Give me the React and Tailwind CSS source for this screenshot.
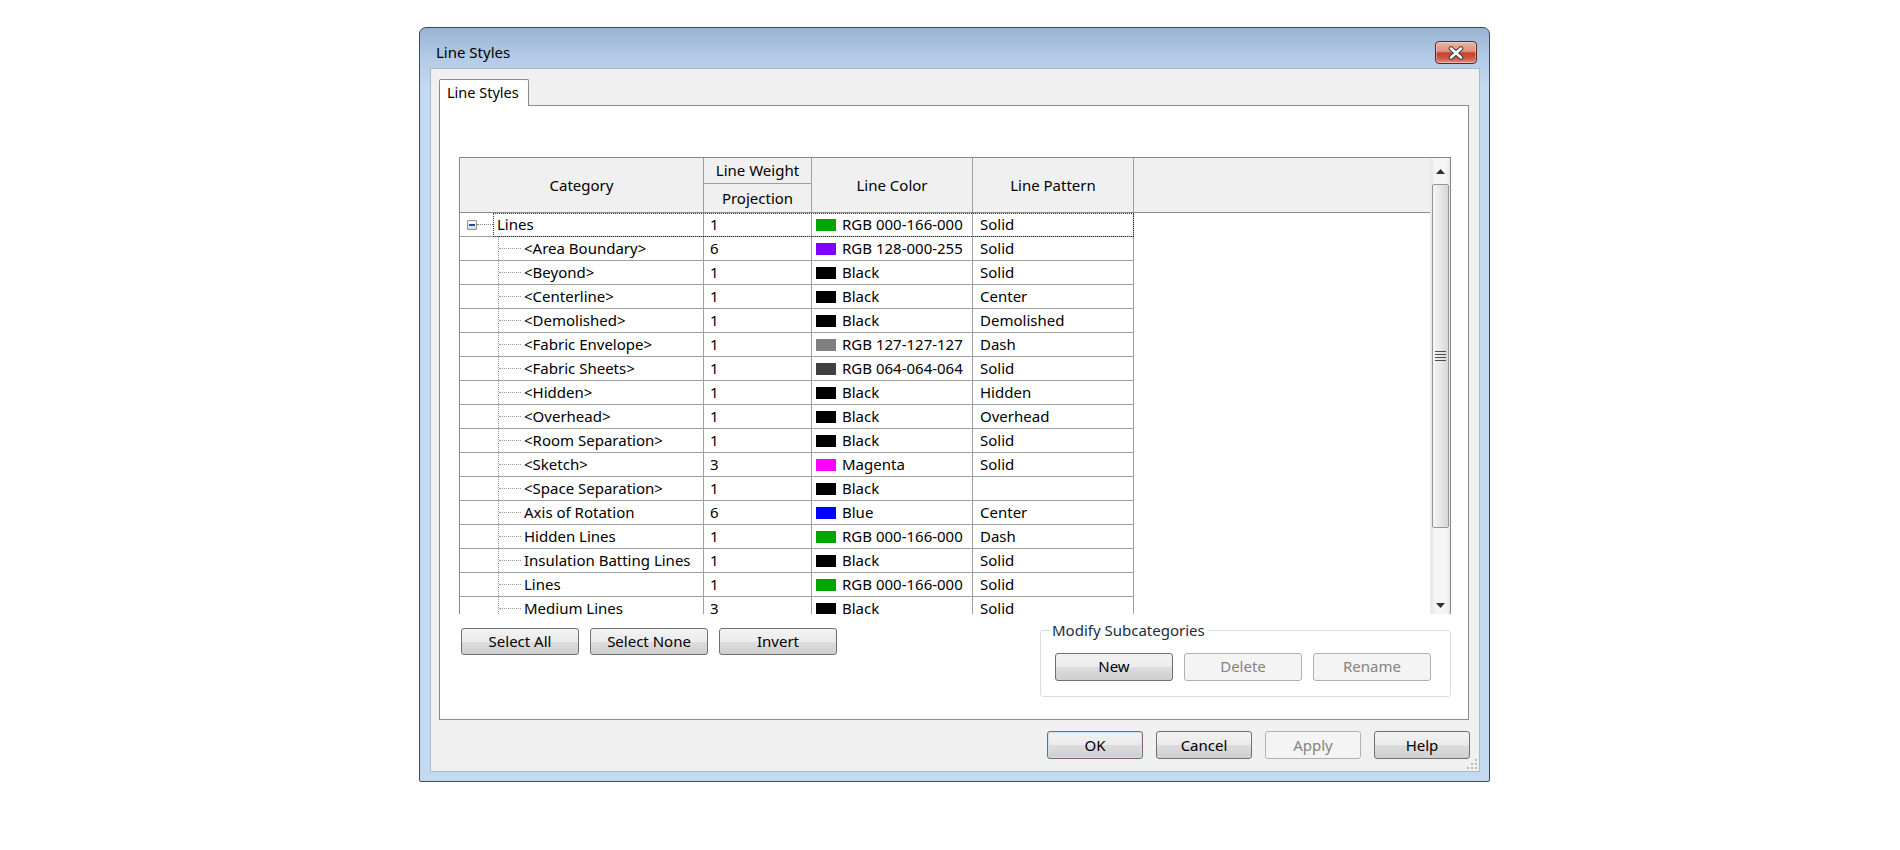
import React from "react";

const ROWS = [
  { name: "Lines", weight: "1", color: "#00a600", label: "RGB 000-166-000", pattern: "Solid", root: true },
  { name: "<Area Boundary>", weight: "6", color: "#8000ff", label: "RGB 128-000-255", pattern: "Solid" },
  { name: "<Beyond>", weight: "1", color: "#000000", label: "Black", pattern: "Solid" },
  { name: "<Centerline>", weight: "1", color: "#000000", label: "Black", pattern: "Center" },
  { name: "<Demolished>", weight: "1", color: "#000000", label: "Black", pattern: "Demolished" },
  { name: "<Fabric Envelope>", weight: "1", color: "#7f7f7f", label: "RGB 127-127-127", pattern: "Dash" },
  { name: "<Fabric Sheets>", weight: "1", color: "#404040", label: "RGB 064-064-064", pattern: "Solid" },
  { name: "<Hidden>", weight: "1", color: "#000000", label: "Black", pattern: "Hidden" },
  { name: "<Overhead>", weight: "1", color: "#000000", label: "Black", pattern: "Overhead" },
  { name: "<Room Separation>", weight: "1", color: "#000000", label: "Black", pattern: "Solid" },
  { name: "<Sketch>", weight: "3", color: "#ff00ff", label: "Magenta", pattern: "Solid" },
  { name: "<Space Separation>", weight: "1", color: "#000000", label: "Black", pattern: "" },
  { name: "Axis of Rotation", weight: "6", color: "#0000ff", label: "Blue", pattern: "Center" },
  { name: "Hidden Lines", weight: "1", color: "#00a600", label: "RGB 000-166-000", pattern: "Dash" },
  { name: "Insulation Batting Lines", weight: "1", color: "#000000", label: "Black", pattern: "Solid" },
  { name: "Lines", weight: "1", color: "#00a600", label: "RGB 000-166-000", pattern: "Solid" },
  { name: "Medium Lines", weight: "3", color: "#000000", label: "Black", pattern: "Solid" },
];

const BTN =
  "flex items-center justify-center rounded-[3px] border border-[#707070] bg-[linear-gradient(180deg,#f2f2f2_0%,#ebebeb_50%,#dddddd_51%,#cfcfcf_100%)] text-black";
const BTN_OFF =
  "flex items-center justify-center rounded-[3px] border border-[#adb2b5] bg-[#f4f4f4] text-[#838383]";

function CloseButton() {
  return (
    <div className="w-[42px] h-[23px] rounded-[4px] border border-[#5c2a24] bg-[linear-gradient(180deg,#ecb5a6_0%,#de8e7b_45%,#c3402e_52%,#cf5c47_80%,#e39684_100%)] flex items-center justify-center shadow-[inset_0_0_0_1px_rgba(255,255,255,0.35)]">
      <svg width="18" height="14" viewBox="0 0 18 14">
        <path d="M4 2.5 L14 11.5 M14 2.5 L4 11.5" stroke="#3d3d3d" strokeWidth="4.6" strokeLinecap="round" />
        <path d="M4 2.5 L14 11.5 M14 2.5 L4 11.5" stroke="#ffffff" strokeWidth="2.6" strokeLinecap="round" />
      </svg>
    </div>
  );
}

function TreeCell({ row }) {
  if (row.root) {
    return (
      <div className="flex items-center h-full">
        <div className="w-[7px]" />
        <div className="w-[10px] h-[10px] border border-[#8f8f8f] rounded-[1px] bg-[linear-gradient(180deg,#ffffff,#dcdcdc)] flex items-center justify-center">
          <div className="w-[6px] h-[2px] bg-[#2a4f9a]" />
        </div>
        <div className="w-[16px] border-t border-dotted border-[#8a8a8a]" />
        <span className="ml-[4px]">{row.name}</span>
      </div>
    );
  }
  return (
    <div className="flex items-center h-full">
      <div className="w-[38px] shrink-0" />
      <div className="h-full border-l border-dotted border-[#9a9a9a]" />
      <div className="w-[22px] border-t border-dotted border-[#9a9a9a]" />
      <span className="ml-[3px] whitespace-nowrap">{row.name}</span>
    </div>
  );
}

function Scrollbar() {
  return (
    <div className="w-[20px] shrink-0 flex flex-col bg-[linear-gradient(90deg,#e6e6e6,#f5f5f5_20%,#f5f5f5_80%,#e6e6e6)] border-l border-[#ececec]">
      <div className="h-[26px] flex items-center justify-center">
        <svg width="9" height="5" viewBox="0 0 9 5">
          <path d="M0 5 L4.5 0 L9 5 Z" fill="#2f2f2f" />
        </svg>
      </div>
      <div className="mx-[1px] h-[344px] rounded-[2px] border border-[#979797] bg-[linear-gradient(90deg,#f5f5f5,#e8e8e8_50%,#d6d6d6)] flex flex-col items-center justify-center gap-[2px]">
        <div className="w-[11px] h-[1px] bg-[#4d4d4d]" />
        <div className="w-[11px] h-[1px] bg-[#4d4d4d]" />
        <div className="w-[11px] h-[1px] bg-[#4d4d4d]" />
        <div className="w-[11px] h-[1px] bg-[#4d4d4d]" />
      </div>
      <div className="flex-1" />
      <div className="h-[18px] flex items-center justify-center">
        <svg width="9" height="5" viewBox="0 0 9 5">
          <path d="M0 0 L4.5 5 L9 0 Z" fill="#2f2f2f" />
        </svg>
      </div>
    </div>
  );
}

function Grid() {
  return (
    <div className="flex w-[992px] h-[457px] border-t border-x border-[#828790] overflow-hidden">
      <div className="w-[970px] flex flex-col">
        {/* header */}
        <div className="flex h-[55px] shrink-0 bg-[#f0f0f0] border-b border-[#8c8c8c]">
          <div className="w-[244px] border-r border-[#a0a0a0] flex items-center justify-center">Category</div>
          <div className="w-[108px] border-r border-[#a0a0a0] flex flex-col">
            <div className="h-[26px] border-b border-[#a0a0a0] flex items-center justify-center">Line Weight</div>
            <div className="flex-1 flex items-center justify-center">Projection</div>
          </div>
          <div className="w-[161px] border-r border-[#a0a0a0] flex items-center justify-center">Line Color</div>
          <div className="w-[161px] border-r border-[#a0a0a0] flex items-center justify-center">Line Pattern</div>
          <div className="flex-1" />
        </div>
        {/* rows */}
        {ROWS.map((row, i) => (
          <div key={i} className="relative flex h-[24px] shrink-0 bg-white">
            <div className="w-[244px] border-r border-b border-[#a0a0a0]">
              <TreeCell row={row} />
            </div>
            <div className="w-[108px] border-r border-b border-[#a0a0a0] pl-[6px] flex items-center">{row.weight}</div>
            <div className="w-[161px] border-r border-b border-[#a0a0a0] pl-[4px] flex items-center">
              <div className="w-[20px] h-[12px] shrink-0" style={{ backgroundColor: row.color }} />
              <span className="ml-[6px] whitespace-nowrap">{row.label}</span>
            </div>
            <div className="w-[161px] border-r border-b border-[#a0a0a0] pl-[7px] flex items-center">{row.pattern}</div>
            <div className="flex-1" />
            {row.root && (
              <div className="absolute left-[33px] top-0 w-[641px] h-[24px] border border-dotted border-[#333333] pointer-events-none" />
            )}
          </div>
        ))}
      </div>
      <Scrollbar />
    </div>
  );
}

export default function App() {
  return (
    <div className="w-[1900px] h-[850px] bg-white pt-[27px] pl-[419px] font-['Noto_Sans','Open_Sans',sans-serif] text-[15px] text-black">
      <div className="w-[1071px] h-[755px] flex flex-col rounded-t-[7px] rounded-b-[2px] border border-[#3b4a5e] bg-[linear-gradient(180deg,#9ab4d2_0px,#b5cde8_34px,#c3d9f0_60px,#c3d9f0_100%)]">
        {/* title bar */}
        <div className="h-[40px] shrink-0 flex items-start justify-between pl-[16px] pr-[12px] pt-[13px]">
          <span className="leading-[22px] text-[15px] text-black">Line Styles</span>
          <CloseButton />
        </div>

        {/* client area */}
        <div className="relative flex-1 ml-[10px] mr-[9px] mb-[9px] bg-[#f0f0f0] border border-[#a6b8cf] pl-[8px] pt-[10px] flex flex-col">
          <div className="relative z-10 w-[90px] h-[27px] -mb-[1px] bg-white border border-b-0 border-[#898c95] rounded-t-[2px] pl-[7px] flex items-center text-[14.5px]">
            Line Styles
          </div>
          <div className="w-[1030px] h-[615px] bg-white border border-[#898c95] pl-[19px] pt-[51px]">
            <Grid />

            <div className="mt-[5px] w-[992px] flex items-start justify-between">
              <div className="mt-[9px] ml-[2px] flex gap-[11px]">
                <div className={`${BTN} w-[118px] h-[27px]`}>Select All</div>
                <div className={`${BTN} w-[118px] h-[27px]`}>Select None</div>
                <div className={`${BTN} w-[118px] h-[27px]`}>Invert</div>
              </div>
              <fieldset className="w-[411px] h-[78px] border border-[#d5dfe5] rounded-[3px] px-[14px]">
                <legend className="ml-[-5px] px-[2px] text-[#1d2b45]">Modify Subcategories</legend>
                <div className="mt-[11px] flex gap-[11px]">
                  <div className={`${BTN} w-[118px] h-[28px]`}>New</div>
                  <div className={`${BTN_OFF} w-[118px] h-[28px]`}>Delete</div>
                  <div className={`${BTN_OFF} w-[118px] h-[28px]`}>Rename</div>
                </div>
              </fieldset>
            </div>
          </div>

          <div className="mt-[11px] w-[1031px] flex justify-end gap-[13px]">
            <div className={`${BTN} w-[96px] h-[28px] border-[#3c7fb1] shadow-[inset_0_0_0_1px_#c5e4f8]`}>OK</div>
            <div className={`${BTN} w-[96px] h-[28px]`}>Cancel</div>
            <div className={`${BTN_OFF} w-[96px] h-[28px]`}>Apply</div>
            <div className={`${BTN} w-[96px] h-[28px]`}>Help</div>
          </div>

          {/* size grip */}
          <svg className="absolute right-[2px] bottom-[2px]" width="11" height="11" viewBox="0 0 11 11">
            {[
              [8, 0], [8, 4], [4, 4], [8, 8], [4, 8], [0, 8],
            ].map(([x, y], i) => (
              <rect key={i} x={x + 1} y={y + 1} width="2" height="2" fill="#b8b8b8" />
            ))}
          </svg>
        </div>
      </div>
    </div>
  );
}
